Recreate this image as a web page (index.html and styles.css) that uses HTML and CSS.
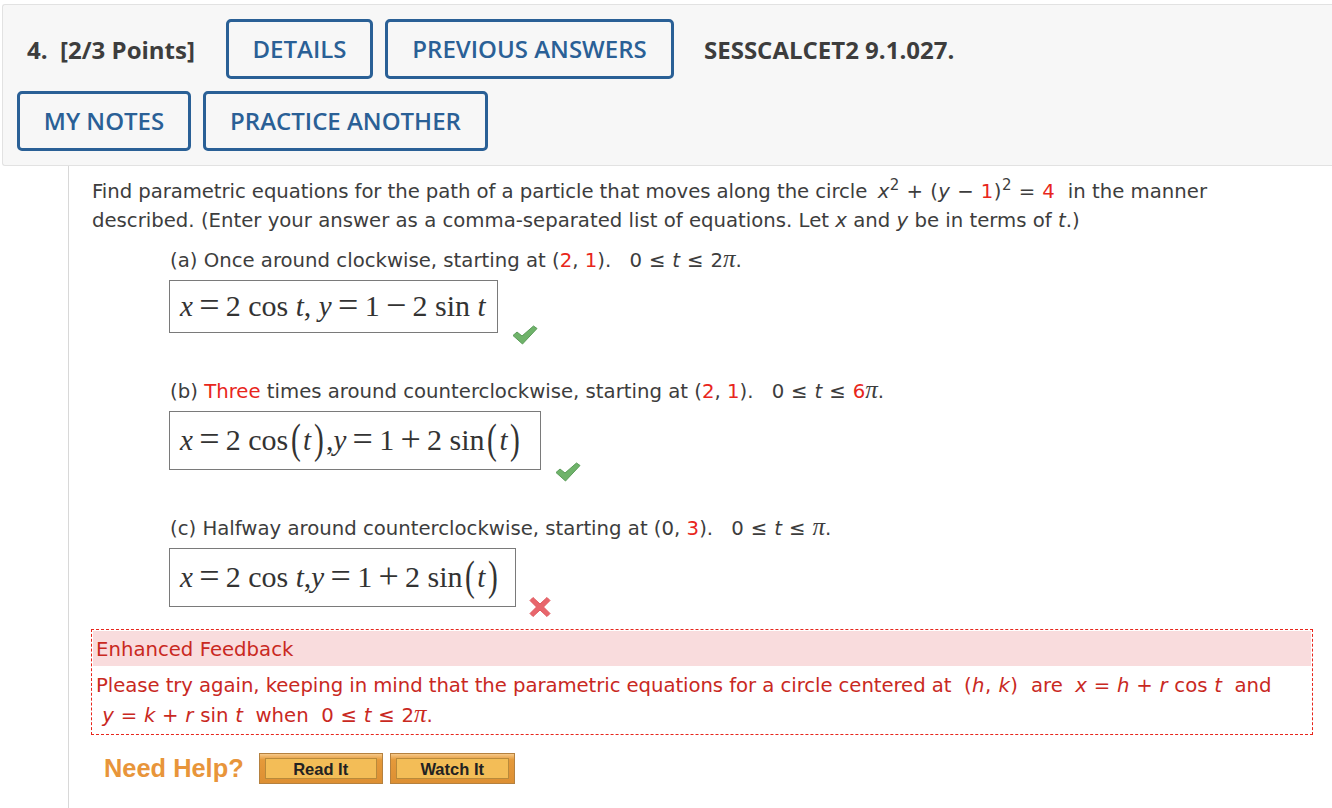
FILE: index.html
```html
<!DOCTYPE html>
<html>
	<head>
		<title>Question 4</title>
		<meta charset="utf-8" />
		<link rel="stylesheet" href="styles.css">
	</head>
	<body>
		<div class="qhead">
			<div class="qrow qrow-top">
				<span class="qnum">4.&nbsp; [2/3 Points]</span>
				<a class="qbtn btn-details">DETAILS</a>
				<a class="qbtn btn-prev">PREVIOUS ANSWERS</a>
				<span class="qref">SESSCALCET2 9.1.027.</span>
			</div>
			<div class="qrow">
				<a class="qbtn btn-notes">MY NOTES</a>
				<a class="qbtn btn-practice">PRACTICE ANOTHER</a>
			</div>
		</div>
		<div class="qbody">
			<p class="intro"><span class="tight">Find parametric equations for the path of a particle that moves along the circle</span> &nbsp;<span class="m-loose"><i>x</i><sup>2</sup> + (<i>y</i> &minus; <span class="red">1</span>)<sup>2</sup> = <span class="red">4</span></span> &nbsp;in the manner<br>described. (Enter your answer as a comma-separated list of equations. Let <i>x</i> and <i>y</i> be in terms of <i>t</i>.)</p>

			<div class="part part-a">
				<p class="ptext">(a) Once around clockwise, starting at (<span class="red">2</span>, <span class="red">1</span>). <span class="mgap">&nbsp;0 &le; <i>t</i> &le; 2<i class="pi">&pi;</i>.</span></p>
				<div class="ansrow">
					<div class="answer ans-a"><i>x</i><span class="op">=</span>2 cos <i>t</i>, <i>y</i><span class="op">=</span>1<span class="op">&minus;</span>2 sin <i>t</i></div>
					<svg class="mark" width="26" height="20" viewBox="0 0 26 20"><path d="M1 10.500 L5 7 L10 11 L21.500 1 L25 3.500 L10.500 19 Z" fill="#6fb36a" stroke="#5a9c58" stroke-width="1"/></svg>
				</div>
			</div>

			<div class="part part-b">
				<p class="ptext">(b) <span class="red">Three</span> times around counterclockwise, starting at (<span class="red">2</span>, <span class="red">1</span>). <span class="mgap">&nbsp;0 &le; <i>t</i> &le; <span class="red">6</span><i class="pi">&pi;</i>.</span></p>
				<div class="ansrow">
					<div class="answer ans-b"><i>x</i><span class="op">=</span>2 cos<span class="paren">(</span><i>t</i><span class="paren">)</span>,<i>y</i><span class="op">=</span>1<span class="op">+</span>2 sin<span class="paren">(</span><i>t</i><span class="paren">)</span></div>
					<svg class="mark" width="26" height="20" viewBox="0 0 26 20"><path d="M1 10.500 L5 7 L10 11 L21.500 1 L25 3.500 L10.500 19 Z" fill="#6fb36a" stroke="#5a9c58" stroke-width="1"/></svg>
				</div>
			</div>

			<div class="part part-c">
				<p class="ptext">(c) Halfway around counterclockwise, starting at (0, <span class="red">3</span>). <span class="mgap">&nbsp;0 &le; <i>t</i> &le; <i class="pi">&pi;</i>.</span></p>
				<div class="ansrow">
					<div class="answer ans-c"><i>x</i><span class="op">=</span>2 cos <i>t</i>,<i>y</i><span class="op">=</span>1<span class="op">+</span>2 sin<span class="paren">(</span><i>t</i><span class="paren">)</span></div>
					<svg class="mark mark-x" width="22" height="22" viewBox="0 0 22 22"><path d="M4 1.500 L11 8 L18 1.500 L21 4.500 L14.500 11 L21 17.500 L18 20.500 L11 14 L4 20.500 L1 17.500 L7.500 11 L1 4.500 Z" fill="#e8666c" stroke="#e0585e" stroke-width="1"/></svg>
				</div>
			</div>

			<div class="feedback">
				<div class="fb-title">Enhanced Feedback</div>
				<div class="fb-text"><span class="tight">Please try again, keeping in mind that the parametric equations for a circle centered at</span> &nbsp;<span class="m-loose">(<i>h</i>, <i>k</i>)</span>&nbsp; are &nbsp;<span class="m"><i>x</i> = <i>h</i> + <i>r</i> cos <i>t</i></span> &nbsp;and<br>&nbsp;<span class="m"><i>y</i> = <i>k</i> + <i>r</i> sin <i>t</i></span> &nbsp;when &nbsp;<span class="m">0 &le; <i>t</i> &le; 2<i class="pi">&pi;</i>.</span></div>
			</div>

			<div class="help">
				<span class="help-label">Need Help?</span>
				<a class="hbtn hbtn-read"><span>Read It</span></a>
				<a class="hbtn hbtn-watch"><span>Watch It</span></a>
			</div>
		</div>
	</body>
</html>
```

FILE: styles.css
```css
html, body {
	margin: 0;
	padding: 0;
	background: #fff;
}
body {
	height: 808px;
	overflow: hidden;
	font-family: "DejaVu Sans", sans-serif;
	font-size: 19.7px;
	color: #3d3d3d;
}
p {
	margin: 0;
}
.red {
	color: #e8261c;
}
sup {
	font-size: 15px;
	line-height: 0;
}
.pi {
	font-family: "Liberation Serif", serif;
	font-size: 25px;
	line-height: 0;
}
.mgap {
	margin-left: 5px;
	word-spacing: 0.7px;
}
.tight {
	letter-spacing: -0.07px;
}
.m {
	word-spacing: 0.5px;
}
.m-loose {
	letter-spacing: 0.45px;
}
.intro .m-loose {
	margin-left: -2px;
}

.qhead {
	margin: 4px 0 0 2px;
	height: 160px;
	background: #f7f7f7;
	border: 1px solid #e2e2e2;
	border-right: 0;
	border-radius: 3px 0 0 3px;
	font-family: "Open Sans", sans-serif;
}
.qrow {
	display: flex;
	align-items: center;
	gap: 12px;
	margin-left: 14px;
	padding-top: 12px;
}
.qrow-top {
	margin-left: 24px;
	padding-top: 14px;
}
.qnum {
	font-weight: 700;
	font-size: 24px;
	width: 187px;
	color: #3d3d3d;
	white-space: nowrap;
}
.qref {
	font-weight: 700;
	font-size: 24px;
	margin-left: 18px;
	color: #3d3d3d;
}
.qbtn {
	display: block;
	box-sizing: border-box;
	height: 60px;
	line-height: 54px;
	text-align: center;
	border: 3px solid #2a6096;
	border-radius: 5px;
	color: #2a6096;
	font-weight: 600;
	font-size: 24px;
}
.btn-details { width: 147px; }
.btn-prev { width: 289px; }
.btn-notes { width: 174px; }
.btn-practice { width: 285px; }

.qbody {
	margin-left: 68px;
	height: 642px;
	border-left: 1px solid #d8d8d8;
	padding-left: 22px;
	box-sizing: border-box;
}
.intro {
	padding: 11px 0 0 1px;
	line-height: 29px;
}
.part {
	margin-left: 78px;
}
.part-a { padding-top: 11px; height: 131px; }
.part-b { height: 137px; }
.part-c { height: 101px; margin-bottom: 14px; }
.ptext {
	padding-left: 1px;
	line-height: 29px;
}
.ansrow {
	display: flex;
	align-items: flex-end;
	margin-top: 5px;
}
.answer {
	box-sizing: border-box;
	border: 1px solid #7a7a7a;
	font-family: "Liberation Serif", serif;
	font-size: 30px;
	color: #333;
	padding-left: 10px;
	white-space: nowrap;
}
.answer i {
	font-size: 29px;
}
.ans-a { width: 329px; height: 53px; line-height: 49px; }
.ans-b { width: 372px; height: 59px; line-height: 55px; }
.ans-c { width: 347px; height: 59px; line-height: 55px; }
.op {
	font-size: 36px;
	line-height: 0;
	margin: 0 6.3px;
	vertical-align: -1px;
}
.paren {
	display: inline-block;
	font-size: 42px;
	line-height: 0;
	margin: 0 0.4px;
	vertical-align: -3px;
	transform: scaleX(0.7);
}
.mark {
	margin-left: 14px;
	margin-bottom: -12px;
}
.mark-x {
	margin-left: 13px;
	margin-bottom: -11px;
}

.feedback {
	box-sizing: border-box;
	width: 1222px;
	height: 106px;
	border: 1px dashed #e8261c;
	padding: 1px;
	color: #c9291f;
}
.fb-title {
	background: #f9dcdd;
	height: 35px;
	line-height: 37px;
	padding-left: 3px;
}
.fb-text {
	padding: 5px 0 0 3px;
	line-height: 30px;
}

.help {
	display: flex;
	align-items: center;
	margin: 18px 0 0 13px;
	height: 31px;
}
.help-label {
	font-family: "Liberation Sans", sans-serif;
	font-weight: 700;
	font-size: 25.4px;
	color: #e8953a;
	margin-right: 15px;
}
.hbtn {
	display: block;
	box-sizing: border-box;
	height: 31px;
	padding: 4px 5px;
	background: linear-gradient(#f6c98a, #e59a3a 20%, #dd8f33);
	border: 1px solid #b5813f;
	margin-right: 7px;
}
.hbtn span {
	display: block;
	box-sizing: border-box;
	height: 21px;
	line-height: 20px;
	background: #f3bd57;
	border: 1px solid #b98a3a;
	text-align: center;
	font-family: "Liberation Sans", sans-serif;
	font-weight: 700;
	font-size: 16.5px;
	color: #222;
}
.hbtn-read { width: 124px; }
.hbtn-watch { width: 125px; }
```
